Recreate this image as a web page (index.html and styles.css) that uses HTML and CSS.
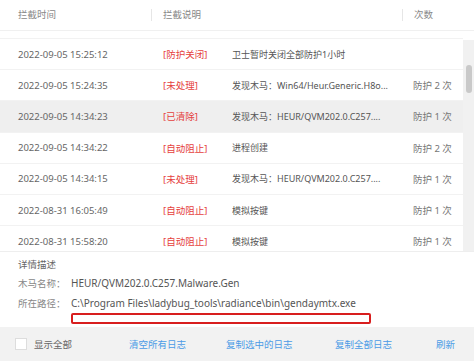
FILE: index.html
```html
<!DOCTYPE html>
<html>
<head>
<meta charset="utf-8">
<link rel="stylesheet" href="styles.css">
</head>
<body>
<div class="app">
  <div class="head">
    <div class="hc">拦截时间</div>
    <div class="hc sep">拦截说明</div>
    <div class="hc sep">次数</div>
  </div>
  <div class="listwrap">
    <div class="list">
      <div class="row"><span class="t">2022-09-05 15:25:12</span><span class="s">[防护关闭]</span><span class="d">卫士暂时关闭全部防护1小时</span><span class="c"></span></div>
      <div class="row"><span class="t">2022-09-05 15:24:35</span><span class="s">[未处理]</span><span class="d">发现木马：Win64/Heur.Generic.H8o...</span><span class="c">防护 2 次</span></div>
      <div class="row sel"><span class="t">2022-09-05 14:34:23</span><span class="s">[已清除]</span><span class="d">发现木马：HEUR/QVM202.0.C257....</span><span class="c">防护 1 次</span></div>
      <div class="row"><span class="t">2022-09-05 14:34:22</span><span class="s">[自动阻止]</span><span class="d">进程创建</span><span class="c">防护 2 次</span></div>
      <div class="row"><span class="t">2022-09-05 14:34:15</span><span class="s">[未处理]</span><span class="d">发现木马：HEUR/QVM202.0.C257....</span><span class="c">防护 1 次</span></div>
      <div class="row"><span class="t">2022-08-31 16:05:49</span><span class="s">[自动阻止]</span><span class="d">模拟按键</span><span class="c">防护 1 次</span></div>
      <div class="row"><span class="t">2022-08-31 15:58:20</span><span class="s">[自动阻止]</span><span class="d">模拟按键</span><span class="c">防护 1 次</span></div>
    </div>
    <div class="track"><div class="thumb"></div></div>
  </div>
  <div class="detail">
    <div class="dt">详情描述</div>
    <div class="dl"><span class="lab">木马名称：</span>HEUR/QVM202.0.C257.Malware.Gen</div>
    <div class="dl"><span class="lab">所在路径：</span>C:\Program Files\ladybug_tools\radiance\bin\gendaymtx.exe</div>
    <div class="mark"></div>
  </div>
  <div class="foot">
    <label class="chk"><span class="box"></span>显示全部</label>
    <span class="lnk l1">清空所有日志</span>
    <span class="lnk l2">复制选中的日志</span>
    <span class="lnk l3">复制全部日志</span>
    <span class="lnk l4">刷新</span>
  </div>
</div>
</body>
</html>
```

FILE: styles.css
```css
* { box-sizing: border-box; }
html, body { margin: 0; padding: 0; background: #fff; }
body {
  width: 474px; height: 361px; overflow: hidden;
  font-family: "Noto Sans", "Noto Sans CJK SC", sans-serif;
  font-size: 9.5px;
  color: #555;
}
.app { display: flex; flex-direction: column; height: 361px; }
.head {
  height: 31px;
  display: grid;
  grid-template-columns: 133px 251px 1fr;
  align-items: center;
  padding-left: 18px;
  border-bottom: 1px solid #f0f0f0;
  color: #888;
}
.hc { line-height: 12px; white-space: nowrap; }
.hc.sep { border-left: 1px solid #e6e6e6; padding-left: 11px; }
.listwrap {
  margin-top: 7px;
  height: 214px;
  display: flex;
  border-bottom: 1px solid #eee;
  overflow: hidden;
}
.list { flex: 1; }
.row {
  height: 31.2px;
  display: grid;
  grid-template-columns: 145px 69px 181px 1fr;
  align-items: center;
  padding-left: 18px;
  border-top: 1px solid #f2f2f2;
  white-space: nowrap;
}
.row.sel { background: #efefef; }
.t { color: #666; }
.s { color: #e5403c; }
.d { color: #555; overflow: hidden; font-size: 9px; }
.c { color: #777; }
.track { width: 11px; background: #f1f1f1; margin-top: 2px; position: relative; }
.thumb { position: absolute; left: 3px; top: 25px; width: 6px; height: 28px; background: #c9c9c9; border-radius: 3px; }
.detail {
  height: 75px;
  padding: 4px 0 0 18px;
  position: relative;
  color: #555;
}
.dt { line-height: 18px; color: #666; }
.dl { line-height: 18.5px; font-size: 10px; white-space: nowrap; }
.dl .lab { color: #888; font-size: 9.5px; display: inline-block; width: 53px; }
.mark {
  position: absolute; left: 71px; top: 61px; width: 300px; height: 11px;
  border: 2px solid #d81e1e; border-radius: 2px;
}
.foot {
  flex: 1;
  background: #f2f2f2;
  display: flex;
  align-items: center;
  padding-left: 15px;
  white-space: nowrap;
}
.chk { display: flex; align-items: center; color: #666; width: 114px; }
.box { width: 12px; height: 12px; background: #fff; border: 1px solid #ddd; margin-right: 7px; }
.lnk { color: #4a9be6; }
.l1 { width: 97px; }
.l2 { width: 109px; }
.l3 { width: 101px; }
```
